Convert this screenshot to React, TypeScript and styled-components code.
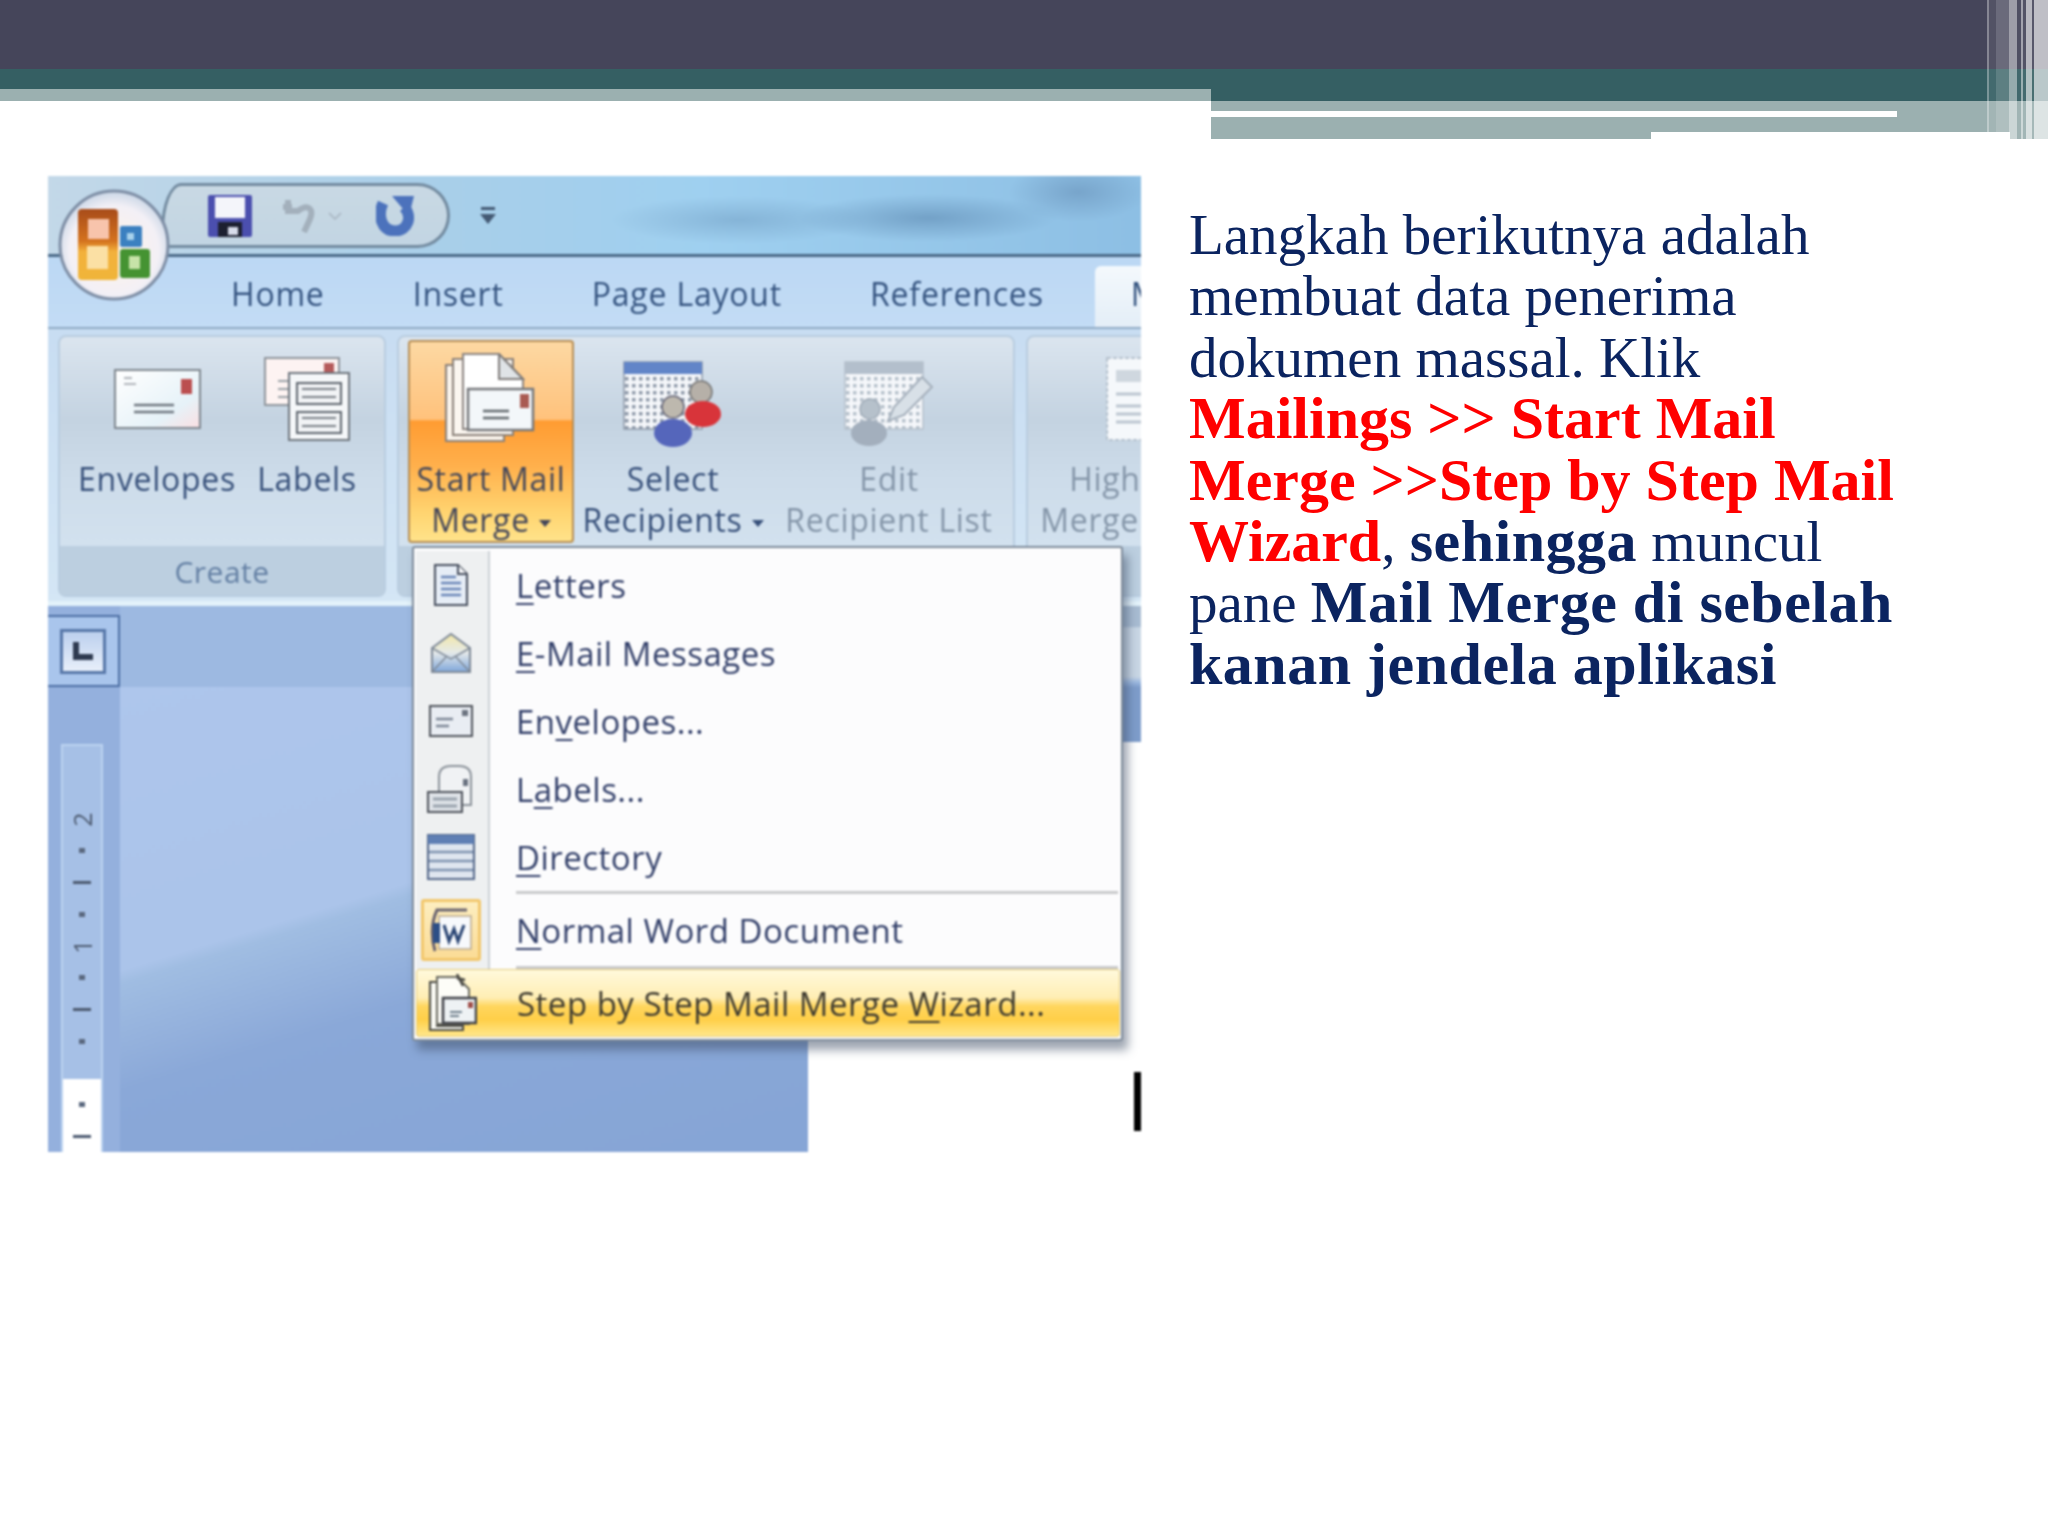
import { createGlobalStyle, styled } from "styled-components";

const GlobalStyle = createGlobalStyle`
  html, body {
    margin: 0;
    padding: 0;
    background: #ffffff;
  }
  * {
    box-sizing: border-box;
  }
`;

//====================================================================> header

const Slide = styled.div`
  position: relative;
  width: 2048px;
  height: 1536px;
  overflow: hidden;
  background: #ffffff;
`;

const Header = styled.header`
  position: relative;
  height: 139px;
`;

const TopBar = styled.div`
  height: 69px;
  background: #45455a;
`;

const Bands = styled.div`
  display: flex;
`;

const BandColumn = styled.div<{ $w?: number }>`
  width: ${(p) => (p.$w ? `${p.$w}px` : "auto")};
  flex: ${(p) => (p.$w ? "none" : "1")};
`;

const Band = styled.div<{ $h: number; $c: string }>`
  height: ${(p) => p.$h}px;
  background: ${(p) => p.$c};
`;

const BandRow = styled.div<{ $h: number }>`
  display: flex;
  height: ${(p) => p.$h}px;
  background: #9bb0b0;
`;

const BandPiece = styled.div<{ $w: number; $c: string }>`
  width: ${(p) => p.$w}px;
  background: ${(p) => p.$c};
`;

const Stripes = styled.div`
  position: absolute;
  top: 0;
  right: 0;
  display: flex;
  height: 139px;
`;

const Stripe = styled.div<{ $w: number; $a: number }>`
  width: ${(p) => p.$w}px;
  background: rgba(255, 255, 255, ${(p) => p.$a});
`;

const stripes = [
  [2, 0.35],
  [7, 0.07],
  [13, 0.2],
  [8, 0.48],
  [4, 0.06],
  [2, 0.5],
  [3, 0.08],
  [6, 0.62],
  [2, 0.1],
  [14, 0.66],
];

//====================================================================> main layout

const Main = styled.main`
  display: flex;
  align-items: flex-start;
  padding: 37px 0 0 48px;
`;

const Shot = styled.section`
  position: relative;
  display: flex;
  flex-direction: column;
  flex: none;
  width: 1093px;
  height: 976px;
  overflow: hidden;
  font-family: "Open Sans", "Noto Sans", sans-serif;
  filter: blur(0.8px);
`;

//====================================================================> title bar

const TitleBar = styled.div`
  display: flex;
  align-items: flex-start;
  height: 78px;
  padding: 7px 0 0 113px;
  background:
    radial-gradient(ellipse 130px 24px at 880px 42px, rgba(92, 136, 176, 0.6), transparent),
    radial-gradient(ellipse 130px 24px at 690px 44px, rgba(104, 148, 186, 0.45), transparent),
    radial-gradient(ellipse 70px 30px at 1030px 16px, rgba(96, 136, 176, 0.5), transparent),
    linear-gradient(90deg, #c3d8e8 0, #a9cfe9 35%, #9fd0f0 60%, #8dbfe4 100%);
`;

const Qat = styled.div`
  display: flex;
  align-items: center;
  width: 289px;
  height: 65px;
  padding-left: 44px;
  border: 3px solid #738ba0;
  border-radius: 26px 42px 42px 0 / 62px 42px 42px 0;
  background: linear-gradient(180deg, #c9d9e4, #c2d5e3);
`;

const QatSlot = styled.span<{ $ml: number }>`
  display: flex;
  margin-left: ${(p) => p.$ml}px;
`;

const Customize = styled.span`
  display: flex;
  margin: 24px 0 0 29px;
`;

const Orb = styled.div`
  position: absolute;
  left: 10px;
  top: 13px;
  width: 112px;
  height: 112px;
  z-index: 2;
`;

//====================================================================> tabs

const TabRow = styled.nav`
  display: flex;
  align-items: stretch;
  gap: 88px;
  height: 76px;
  padding: 9px 0 0 183px;
  border-top: 3px solid #4b6a88;
  border-bottom: 2px solid #8faac4;
  background: linear-gradient(180deg, #bcd8f4, #c3dcf5);
`;

const Tab = styled.div<{ $active?: boolean }>`
  flex: none;
  padding: ${(p) => (p.$active ? "0 0 0 36px" : "0")};
  margin-left: ${(p) => (p.$active ? "-37px" : "0")};
  font-size: 32px;
  line-height: 56px;
  letter-spacing: 0.8px;
  white-space: nowrap;
  color: #355480;
  border-radius: ${(p) => (p.$active ? "6px 0 0 0" : "0")};
  background: ${(p) => (p.$active ? "linear-gradient(180deg, #f4f9fd, #e4eef7)" : "transparent")};
`;

//====================================================================> ribbon

const Ribbon = styled.div`
  display: flex;
  gap: 11px;
  height: 279px;
  padding: 6px 0 0 10px;
  border-bottom: 5px solid #e3f2fa;
  background: linear-gradient(180deg, #c8ddf2, #d4e6f5);
`;

const Group = styled.div<{ $w: number }>`
  display: flex;
  flex-direction: column;
  flex: none;
  width: ${(p) => p.$w}px;
  height: 262px;
  border: 2px solid #b9cde0;
  border-radius: 8px;
  background: linear-gradient(180deg, #dbe5ef 0, #c4d3e1 32%, #cddcea 55%, #d6e5f2 100%);
`;

const GroupRow = styled.div<{ $pl: number }>`
  display: flex;
  flex: 1;
  padding: 3px 0 0 ${(p) => p.$pl}px;
`;

const GroupLabel = styled.div`
  height: 49px;
  padding-top: 3px;
  font-size: 30px;
  line-height: 46px;
  letter-spacing: 0.5px;
  text-align: center;
  color: #6480a4;
  background: #bccfe0;
`;

const RibbonButton = styled.div<{ $w: number; $active?: boolean; $muted?: boolean }>`
  display: flex;
  flex-direction: column;
  align-items: center;
  flex: none;
  width: ${(p) => p.$w}px;
  height: 203px;
  font-size: 32px;
  line-height: 41px;
  letter-spacing: 0.7px;
  white-space: nowrap;
  color: ${(p) => (p.$active ? "#44475a" : p.$muted ? "#8596a9" : "#37507a")};
  box-shadow: ${(p) => (p.$active ? "inset 0 0 0 2px #b68f58" : "none")};
  border-radius: 4px;
  background: ${(p) =>
    p.$active
      ? "linear-gradient(180deg, #fdd9a4 0, #ffc27c 39%, #ff9c32 40%, #ffb04c 62%, #ffd470 85%, #ffe48c 100%)"
      : "transparent"};
`;

const IconSlot = styled.div<{ $dy?: number }>`
  display: flex;
  align-items: center;
  justify-content: center;
  flex: none;
  height: 118px;
  padding-top: ${(p) => p.$dy ?? 0}px;
`;

const Caret = styled.span`
  display: inline-block;
  width: 0;
  height: 0;
  margin-left: 9px;
  vertical-align: 5px;
  border-left: 6px solid transparent;
  border-right: 6px solid transparent;
  border-top: 7px solid currentColor;
`;

//====================================================================> document area

const DocArea = styled.div`
  display: flex;
  flex: 1;
`;

const BlueSide = styled.div`
  display: flex;
  flex: none;
  width: 760px;
  background: #9db9e1;
`;

const Rail = styled.div`
  display: flex;
  flex-direction: column;
  flex: none;
  width: 72px;
  padding-top: 9px;
  background: #94b0dd;
`;

const TabStop = styled.div`
  display: flex;
  align-items: center;
  justify-content: center;
  flex: none;
  width: 72px;
  height: 72px;
  border: 2px solid #4d6fa4;
  border-left: 0;
  background: #a9c5ec;
`;

const TabStopInner = styled.div`
  display: flex;
  align-items: center;
  justify-content: center;
  width: 46px;
  height: 45px;
  border: 3px solid #5777a8;
  background: linear-gradient(180deg, #bcd0ee, #e8effa);
`;

const VerticalRuler = styled.div`
  display: flex;
  flex-direction: column;
  align-items: center;
  flex: 1;
  width: 42px;
  margin: 57px 0 0 13px;
  padding-top: 57px;
  border: 2px solid #bcd3f0;
  border-bottom: 0;
  background: linear-gradient(180deg, #a6c0e6 0, #a6c0e6 333px, #ffffff 333px);
`;

const Tick = styled.div`
  display: flex;
  align-items: center;
  justify-content: center;
  flex: none;
  height: 31.7px;
`;

const TickDot = styled.span`
  width: 6px;
  height: 5px;
  background: #5a687e;
`;

const TickDash = styled.span`
  width: 4px;
  height: 3px;
  box-shadow: -7px 0 0 #4c5a70, -3px 0 0 #4c5a70, 3px 0 0 #4c5a70, 7px 0 0 #4c5a70;
  background: #4c5a70;
`;

const TickDigit = styled.span`
  transform: rotate(-90deg);
  font-size: 25px;
  line-height: 25px;
  color: #4f5d73;
`;

const Canvas = styled.div`
  flex: 1;
  margin-top: 81px;
  background: linear-gradient(163deg, #aec6ec 0, #abc4ea 42%, #a0bde2 44%, #93b0dc 54%, #8aa8d8 60%, #86a5d6 100%);
`;

const PageSide = styled.div`
  display: flex;
  flex-direction: column;
  flex: 1;
`;

const PageRuler = styled.div`
  flex: none;
  height: 136px;
  background: linear-gradient(180deg, #a8bcd2 0, #a8bcd2 15%, #c8d6e4 16%, #c8d6e4 52%, #9db9e1 56%, #7e9dcb 60%, #7e9dcb 100%);
`;

const Page = styled.div`
  display: flex;
  justify-content: flex-end;
  flex: 1;
  background: #ffffff;
`;

const TextCursor = styled.div`
  flex: none;
  width: 7px;
  height: 59px;
  margin-top: 330px;
  background: #000000;
`;

//====================================================================> dropdown menu

const Menu = styled.div`
  position: absolute;
  left: 364px;
  top: 370px;
  display: flex;
  flex-direction: column;
  width: 711px;
  height: 495px;
  padding: 3px 1px 0 2px;
  border: 2px solid #7f8c9b;
  border-radius: 3px;
  background: #fcfcfd;
  box-shadow: 5px 9px 10px rgba(60, 75, 100, 0.5);
  z-index: 3;
`;

const MenuItem = styled.div<{ $h: number; $active?: boolean }>`
  display: flex;
  align-items: center;
  flex: none;
  height: ${(p) => p.$h}px;
  font-size: 33px;
  letter-spacing: 0.5px;
  white-space: nowrap;
  color: ${(p) => (p.$active ? "#403c30" : "#33406a")};
  border: ${(p) => (p.$active ? "1px solid #e5cc7e" : "0")};
  border-radius: 3px;
  background: ${(p) =>
    p.$active
      ? "linear-gradient(180deg, #fff9dc 0, #ffeeb4 42%, #ffd65e 55%, #ffcf48 75%, #ffe78c 100%)"
      : "transparent"};
`;

const Gutter = styled.div<{ $plain?: boolean }>`
  display: flex;
  align-items: center;
  justify-content: center;
  flex: none;
  align-self: stretch;
  width: 74px;
  margin-right: 26px;
  padding-right: 3px;
  background: ${(p) => (p.$plain ? "transparent" : "#eef0f1")};
  border-right: ${(p) => (p.$plain ? "0" : "2px solid #ccd1d6")};
`;

const LitBox = styled.div`
  display: flex;
  align-items: center;
  justify-content: center;
  flex: none;
  width: 60px;
  height: 62px;
  border: 3px solid #f2c76c;
  border-radius: 3px;
  background: linear-gradient(180deg, #fdeec0, #fbdc96);
`;

const MenuRule = styled.div`
  display: flex;
  flex: none;
  height: 3px;
`;

const RuleLine = styled.div`
  flex: 1;
  margin-right: 2px;
  background: #c9cacc;
`;

const Hot = styled.u`
  text-underline-offset: 5px;
  text-decoration-thickness: 2px;
`;

//====================================================================> right text

const Copy = styled.div`
  flex: none;
  margin-left: 48px;
  padding-top: 28px;
  font-family: "Liberation Serif", "Times New Roman", serif;
  font-size: 57px;
  line-height: 61.4px;
  color: #0b2460;
`;

const CopyLine = styled.div`
  height: 61.4px;
  white-space: nowrap;
`;

const Accent = styled.strong`
  font-size: 60px;
  font-weight: 700;
  color: #ff0000;
`;

const Heavy = styled.strong`
  font-size: 60px;
  font-weight: 700;
  letter-spacing: 0.5px;
`;

//====================================================================> icons

function OrbIcon() {
  return (
    <svg width="112" height="112" viewBox="0 0 112 112">
      <defs>
        <radialGradient id="orbFill" cx="50%" cy="55%" r="55%">
          <stop offset="0" stopColor="#fff3e6" />
          <stop offset="0.75" stopColor="#f3f0f6" />
          <stop offset="1" stopColor="#c9d6e6" />
        </radialGradient>
        <linearGradient id="orbOrange" x1="0" y1="0" x2="0" y2="1">
          <stop offset="0" stopColor="#a84c1a" />
          <stop offset="0.45" stopColor="#d4721e" />
          <stop offset="0.6" stopColor="#f3b13c" />
          <stop offset="1" stopColor="#f0b53a" />
        </linearGradient>
      </defs>
      <circle cx="56" cy="56" r="54" fill="url(#orbFill)" stroke="#7f8fa6" strokeWidth="3" />
      <rect x="20" y="20" width="40" height="71" rx="4" fill="url(#orbOrange)" />
      <rect x="30" y="30" width="21" height="20" fill="#f8c4ac" />
      <rect x="29" y="57" width="21" height="23" fill="#fbe0a4" />
      <rect x="62" y="37" width="22" height="21" rx="2" fill="#3b80c0" />
      <rect x="69" y="44" width="7" height="7" fill="#a8d2ec" />
      <rect x="62" y="60" width="30" height="29" rx="3" fill="#459332" />
      <rect x="71" y="67" width="11" height="13" fill="#c7e3a8" />
    </svg>
  );
}

function SaveIcon() {
  return (
    <svg width="44" height="42" viewBox="0 0 44 42">
      <rect x="0" y="0" width="44" height="42" rx="2" fill="#4b4fae" />
      <rect x="7" y="2" width="30" height="21" fill="#f4f5fa" />
      <rect x="10" y="27" width="24" height="15" fill="#1d2030" />
      <rect x="20" y="32" width="10" height="8" fill="#d8dcea" />
    </svg>
  );
}

function UndoIcon() {
  return (
    <svg width="36" height="38" viewBox="0 0 36 38">
      <path d="M3 10 H12 M8 3 V14 H18 C28 6 34 12 30 22 L24 35" fill="none" stroke="#a3b0bc" strokeWidth="6" />
    </svg>
  );
}

function SplitMark() {
  return (
    <svg width="14" height="8" viewBox="0 0 14 8">
      <path d="M1 1 L7 7 L13 1" fill="none" stroke="#aebcc8" strokeWidth="2" />
    </svg>
  );
}

function RedoIcon() {
  return (
    <svg width="38" height="40" viewBox="0 0 38 40">
      <path d="M7 7 C1 20 6 35 19 35 C32 35 37 20 28 11" fill="none" stroke="#4c72bc" strokeWidth="11" />
      <path d="M16 0 L38 0 L33 20 Z" fill="#4c72bc" />
    </svg>
  );
}

function CustomizeIcon() {
  return (
    <svg width="18" height="18" viewBox="0 0 18 18">
      <rect x="2" y="0" width="14" height="3" fill="#445a74" />
      <path d="M1 7 H17 L9 17 Z" fill="#445a74" />
    </svg>
  );
}

function EnvelopeIcon() {
  return (
    <svg width="87" height="60" viewBox="0 0 87 60">
      <defs>
        <linearGradient id="envFill" x1="0" y1="0" x2="1" y2="1">
          <stop offset="0" stopColor="#ffffff" />
          <stop offset="0.7" stopColor="#e6f2f8" />
          <stop offset="1" stopColor="#fbdfe2" />
        </linearGradient>
      </defs>
      <rect x="1" y="1" width="85" height="58" fill="url(#envFill)" stroke="#7f878f" strokeWidth="2" />
      <rect x="67" y="10" width="11" height="15" fill="#bb4f50" />
      <path d="M10 9 H18 M10 15 H22" stroke="#b0b4ba" strokeWidth="2" />
      <path d="M20 36 H60 M20 43 H60" stroke="#6f7780" strokeWidth="2.5" />
    </svg>
  );
}

function LabelsIcon() {
  return (
    <svg width="86" height="84" viewBox="0 0 86 84">
      <rect x="1" y="1" width="74" height="47" fill="#fdf3f2" stroke="#8f959c" strokeWidth="2" />
      <rect x="60" y="6" width="10" height="12" fill="#b55a5a" />
      <path d="M14 24 H28 M14 32 H28 M14 40 H28" stroke="#9aa0a6" strokeWidth="2" />
      <rect x="25" y="16" width="60" height="67" fill="#f5f7f9" stroke="#6f767e" strokeWidth="2" />
      <rect x="33" y="26" width="44" height="21" fill="#f1f3f5" stroke="#5f666e" strokeWidth="2" />
      <rect x="33" y="55" width="44" height="21" fill="#f1f3f5" stroke="#5f666e" strokeWidth="2" />
      <path d="M38 32 H72 M38 40 H72 M38 61 H72 M38 69 H72" stroke="#7a8088" strokeWidth="2" />
    </svg>
  );
}

function MergeIcon() {
  return (
    <svg width="96" height="92" viewBox="0 0 96 92">
      <path d="M2 13 H10 V87 H60" fill="#f3f3f2" stroke="#8a7a6a" strokeWidth="2" />
      <rect x="3" y="12" width="58" height="76" fill="#faf4ec" stroke="#8a8078" strokeWidth="2" />
      <rect x="10" y="6" width="60" height="76" fill="#fbf6f0" stroke="#8a8078" strokeWidth="2" />
      <path d="M20 1 H56 L80 26 V76 H20 Z" fill="#ffffff" stroke="#8b8480" strokeWidth="2" />
      <path d="M56 1 V26 H80 Z" fill="#dfe3e6" stroke="#7f7c7a" strokeWidth="2" />
      <rect x="25" y="36" width="65" height="41" fill="#f3f7fa" stroke="#76787c" strokeWidth="2.5" />
      <rect x="77" y="41" width="9" height="14" fill="#a95a52" />
      <path d="M40 58 H66 M40 65 H66" stroke="#62686e" strokeWidth="2.5" />
    </svg>
  );
}

function GridSheet({ id, band, dot }: { id: string; band: string; dot: string }) {
  return (
    <>
      <defs>
        <pattern id={id} width="7" height="7" patternUnits="userSpaceOnUse">
          <rect width="7" height="7" fill="#f6f8fb" />
          <rect x="2" y="2" width="3.5" height="3.5" fill={dot} />
        </pattern>
      </defs>
      <rect x="1" y="1" width="78" height="67" fill={`url(#${id})`} stroke={dot} strokeWidth="1.5" />
      <rect x="1" y="1" width="78" height="12" fill={band} />
    </>
  );
}

function SelectIcon() {
  return (
    <svg width="100" height="86" viewBox="0 0 100 86">
      <GridSheet id="gridSelect" band="#6185c8" dot="#8d98a8" />
      <circle cx="78" cy="31" r="11" fill="#b6b0a8" stroke="#777" strokeWidth="1.5" />
      <ellipse cx="80" cy="53" rx="18" ry="13" fill="#d8343a" />
      <circle cx="50" cy="46" r="11" fill="#bdb8ae" stroke="#667" strokeWidth="1.5" />
      <ellipse cx="50" cy="72" rx="19" ry="14" fill="#5566bb" />
    </svg>
  );
}

function EditIcon() {
  return (
    <svg width="90" height="86" viewBox="0 0 90 86">
      <GridSheet id="gridEdit" band="#b3bfcc" dot="#b4bfca" />
      <circle cx="26" cy="48" r="10" fill="#b6c1cb" stroke="#a0acb8" strokeWidth="1.5" />
      <ellipse cx="25" cy="72" rx="18" ry="13" fill="#a3afbd" />
      <path d="M44 60 L50 46 L78 16 L88 26 L60 54 Z" fill="#d8e0e7" stroke="#a5b0bc" strokeWidth="2" />
    </svg>
  );
}

function HighlightIcon() {
  return (
    <svg width="66" height="86" viewBox="0 0 66 86">
      <rect x="1" y="2" width="64" height="82" fill="#f5f8fb" stroke="#b6c2ce" strokeWidth="2" strokeDasharray="4 2" />
      <rect x="10" y="14" width="46" height="12" fill="#cfd7df" />
      <path d="M10 38 H56 M10 50 H56 M10 58 H56 M10 66 H56" stroke="#bcc6d0" strokeWidth="3" />
    </svg>
  );
}

function LettersIcon() {
  return (
    <svg width="34" height="42" viewBox="0 0 34 42">
      <path d="M1 1 H24 L33 10 V41 H1 Z" fill="#e6edf6" stroke="#474f5e" strokeWidth="2" />
      <path d="M24 1 V10 H33" fill="#f7f8fa" stroke="#474f5e" strokeWidth="2" />
      <path d="M7 13 H22 M7 19 H27 M7 25 H27 M7 31 H27" stroke="#6a86b8" strokeWidth="2.5" />
    </svg>
  );
}

function OpenMailIcon() {
  return (
    <svg width="40" height="40" viewBox="0 0 40 40">
      <defs>
        <linearGradient id="openMail" x1="0" y1="0" x2="0" y2="1">
          <stop offset="0" stopColor="#f3e8a8" />
          <stop offset="0.5" stopColor="#e4e9ea" />
          <stop offset="1" stopColor="#7ea6da" />
        </linearGradient>
      </defs>
      <path d="M1 15 L20 1 L39 15 V39 H1 Z" fill="url(#openMail)" stroke="#7f8a98" strokeWidth="2" />
      <path d="M1 15 L20 26 L39 15 M1 39 L15 24 M39 39 L25 24" fill="none" stroke="#7f8a98" strokeWidth="1.5" />
    </svg>
  );
}

function SmallEnvelopeIcon() {
  return (
    <svg width="44" height="32" viewBox="0 0 44 32">
      <rect x="1" y="1" width="42" height="30" fill="#e9edf3" stroke="#50545c" strokeWidth="2" />
      <rect x="33" y="5" width="6" height="6" fill="#6d7480" />
      <path d="M7 14 H24 M7 21 H20" stroke="#7d8796" strokeWidth="2.5" />
    </svg>
  );
}

function LabelPrinterIcon() {
  return (
    <svg width="48" height="48" viewBox="0 0 48 48">
      <path d="M12 26 V12 C12 5 16 1 24 1 H32 C40 1 44 5 44 12 V40 H12" fill="#f0f2f4" stroke="#8b929a" strokeWidth="2" />
      <rect x="36" y="14" width="5" height="7" fill="#6a7280" />
      <rect x="1" y="27" width="34" height="20" fill="#dfe3e8" stroke="#4e535c" strokeWidth="2" />
      <path d="M6 34 H30 M6 41 H30" stroke="#9aa3ad" strokeWidth="3" />
    </svg>
  );
}

function DirectoryIcon() {
  return (
    <svg width="48" height="46" viewBox="0 0 48 46">
      <rect x="1" y="1" width="46" height="44" fill="#dfe6ef" stroke="#55688a" strokeWidth="2" />
      <rect x="1" y="1" width="46" height="9" fill="#5f7fb4" />
      <path d="M2 18 H46 M2 27 H46 M2 36 H46" stroke="#7f93b0" strokeWidth="2.5" />
    </svg>
  );
}

function WordDocIcon() {
  return (
    <svg width="44" height="46" viewBox="0 0 44 46">
      <path d="M6 44 C2 30 2 16 8 3 H38" fill="none" stroke="#6a6470" strokeWidth="3" />
      <rect x="10" y="9" width="32" height="33" fill="#f7f9fc" stroke="#b8a890" strokeWidth="1.5" />
      <rect x="4" y="16" width="7" height="20" fill="#2d4f86" />
      <path d="M15 18 L20 34 L25 22 L29 34 L35 18" fill="none" stroke="#2a4574" strokeWidth="3" />
    </svg>
  );
}

function WizardIcon() {
  return (
    <svg width="48" height="58" viewBox="0 0 48 58">
      <path d="M1 8 H8 V52 H34 V56 H1 Z" fill="#f9f9f2" stroke="#4a4a44" strokeWidth="2" />
      <path d="M8 3 H28 L40 15 V50 H8 Z" fill="#fdfdf8" stroke="#6a6a60" strokeWidth="2" />
      <path d="M28 0 L34 12 M28 4 L36 6" stroke="#4a4a44" strokeWidth="2.5" />
      <rect x="14" y="24" width="33" height="25" fill="#eef2f4" stroke="#3f4147" strokeWidth="2.5" />
      <rect x="39" y="28" width="5" height="6" fill="#a04f4a" />
      <path d="M21 38 H33 M21 42 H30" stroke="#70808c" strokeWidth="2" />
    </svg>
  );
}

function CornerMark() {
  return (
    <svg width="20" height="18" viewBox="0 0 20 18">
      <path d="M0 0 H6 V12 H20 V18 H0 Z" fill="#2e3a50" />
    </svg>
  );
}

//====================================================================>

const ticks = ["2", "dot", "dash", "dot", "1", "dot", "dash", "dot", "", "dot", "dash"];

function App() {
  return (
    <Slide>
      <GlobalStyle />
      <Header>
        <TopBar />
        <Bands>
          <BandColumn $w={1211}>
            <Band $h={20} $c="#355f63" />
            <Band $h={12} $c="#9bb0b0" />
          </BandColumn>
          <BandColumn>
            <Band $h={32} $c="#355f63" />
            <Band $h={10} $c="#9bb0b0" />
            <BandRow $h={6}>
              <BandPiece $w={686} $c="#ffffff" />
            </BandRow>
            <Band $h={15} $c="#9bb0b0" />
            <BandRow $h={7}>
              <BandPiece $w={440} $c="#9bb0b0" />
              <BandPiece $w={359} $c="#ffffff" />
            </BandRow>
          </BandColumn>
        </Bands>
        <Stripes>
          {stripes.map(([w, a], i) => (
            <Stripe key={i} $w={w} $a={a} />
          ))}
        </Stripes>
      </Header>

      <Main>
        <Shot>
          <TitleBar>
            <Qat>
              <QatSlot $ml={0}><SaveIcon /></QatSlot>
              <QatSlot $ml={28}><UndoIcon /></QatSlot>
              <QatSlot $ml={12}><SplitMark /></QatSlot>
              <QatSlot $ml={34}><RedoIcon /></QatSlot>
            </Qat>
            <Customize><CustomizeIcon /></Customize>
          </TitleBar>
          <Orb><OrbIcon /></Orb>

          <TabRow>
            <Tab>Home</Tab>
            <Tab>Insert</Tab>
            <Tab>Page Layout</Tab>
            <Tab>References</Tab>
            <Tab $active>Mailings</Tab>
          </TabRow>

          <Ribbon>
            <Group $w={328}>
              <GroupRow $pl={7}>
                <RibbonButton $w={180}>
                  <IconSlot><EnvelopeIcon /></IconSlot>
                  <span>Envelopes</span>
                </RibbonButton>
                <RibbonButton $w={120}>
                  <IconSlot><LabelsIcon /></IconSlot>
                  <span>Labels</span>
                </RibbonButton>
              </GroupRow>
              <GroupLabel>Create</GroupLabel>
            </Group>
            <Group $w={618}>
              <GroupRow $pl={9}>
                <RibbonButton $w={166} $active>
                  <IconSlot><MergeIcon /></IconSlot>
                  <span>Start Mail</span>
                  <span>Merge<Caret /></span>
                </RibbonButton>
                <RibbonButton $w={198}>
                  <IconSlot $dy={10}><SelectIcon /></IconSlot>
                  <span>Select</span>
                  <span>Recipients<Caret /></span>
                </RibbonButton>
                <RibbonButton $w={234} $muted>
                  <IconSlot $dy={10}><EditIcon /></IconSlot>
                  <span>Edit</span>
                  <span>Recipient List</span>
                </RibbonButton>
              </GroupRow>
              <GroupLabel />
            </Group>
            <Group $w={300}>
              <GroupRow $pl={4}>
                <RibbonButton $w={214} $muted>
                  <IconSlot><HighlightIcon /></IconSlot>
                  <span>Highlight</span>
                  <span>Merge Fields</span>
                </RibbonButton>
              </GroupRow>
              <GroupLabel />
            </Group>
          </Ribbon>

          <DocArea>
            <BlueSide>
              <Rail>
                <TabStop>
                  <TabStopInner><CornerMark /></TabStopInner>
                </TabStop>
                <VerticalRuler>
                  {ticks.map((t, i) => (
                    <Tick key={i}>
                      {t === "dot" && <TickDot />}
                      {t === "dash" && <TickDash />}
                      {(t === "1" || t === "2") && <TickDigit>{t}</TickDigit>}
                    </Tick>
                  ))}
                </VerticalRuler>
              </Rail>
              <Canvas />
            </BlueSide>
            <PageSide>
              <PageRuler />
              <Page>
                <TextCursor />
              </Page>
            </PageSide>
          </DocArea>

          <Menu>
            <MenuItem $h={68}>
              <Gutter><LettersIcon /></Gutter>
              <span><Hot>L</Hot>etters</span>
            </MenuItem>
            <MenuItem $h={68}>
              <Gutter><OpenMailIcon /></Gutter>
              <span><Hot>E</Hot>-Mail Messages</span>
            </MenuItem>
            <MenuItem $h={68}>
              <Gutter><SmallEnvelopeIcon /></Gutter>
              <span>En<Hot>v</Hot>elopes...</span>
            </MenuItem>
            <MenuItem $h={68}>
              <Gutter><LabelPrinterIcon /></Gutter>
              <span>L<Hot>a</Hot>bels...</span>
            </MenuItem>
            <MenuItem $h={68}>
              <Gutter><DirectoryIcon /></Gutter>
              <span><Hot>D</Hot>irectory</span>
            </MenuItem>
            <MenuRule>
              <Gutter />
              <RuleLine />
            </MenuRule>
            <MenuItem $h={72}>
              <Gutter><LitBox><WordDocIcon /></LitBox></Gutter>
              <span><Hot>N</Hot>ormal Word Document</span>
            </MenuItem>
            <MenuRule>
              <Gutter />
              <RuleLine />
            </MenuRule>
            <MenuItem $h={68} $active>
              <Gutter $plain><WizardIcon /></Gutter>
              <span>Step by Step Mail Merge <Hot>W</Hot>izard...</span>
            </MenuItem>
          </Menu>
        </Shot>

        <Copy>
          <CopyLine>Langkah berikutnya adalah</CopyLine>
          <CopyLine>membuat data penerima</CopyLine>
          <CopyLine>dokumen massal. Klik</CopyLine>
          <CopyLine><Accent>Mailings &gt;&gt; Start Mail</Accent></CopyLine>
          <CopyLine><Accent>Merge &gt;&gt;Step by Step Mail</Accent></CopyLine>
          <CopyLine><Accent>Wizard</Accent>, <Heavy>sehingga</Heavy> muncul</CopyLine>
          <CopyLine>pane <Heavy>Mail Merge di sebelah</Heavy></CopyLine>
          <CopyLine><Heavy>kanan jendela aplikasi</Heavy></CopyLine>
        </Copy>
      </Main>
    </Slide>
  );
}

export default App;
